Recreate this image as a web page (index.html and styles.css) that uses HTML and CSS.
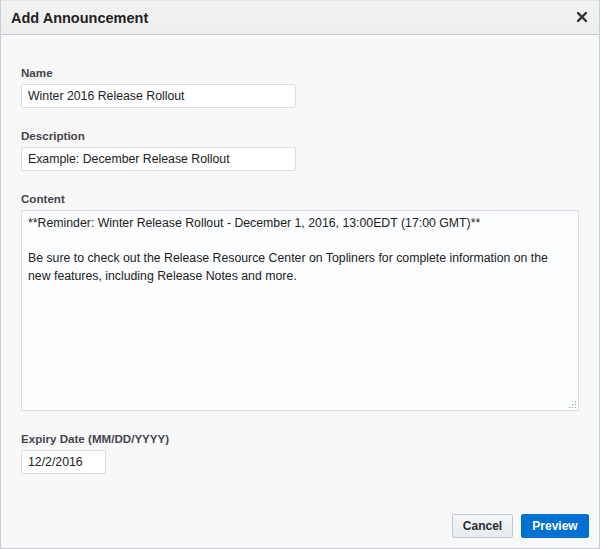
FILE: index.html
```html
<!DOCTYPE html>
<html>
<head>
<meta charset="utf-8">
<link rel="stylesheet" href="styles.css">
</head>
<body>
<div class="dialog">
  <div class="header">
    <h1 class="title">Add Announcement</h1>
    <button class="close" aria-label="Close">
      <svg width="10" height="10" viewBox="0 0 10 10"><path d="M1 1 L9 9 M9 1 L1 9" stroke="#333" stroke-width="2.4" stroke-linecap="square"/></svg>
    </button>
  </div>
  <div class="body">
    <div class="field">
      <label class="label">Name</label>
      <input class="input input-md" type="text" value="Winter 2016 Release Rollout">
    </div>
    <div class="field">
      <label class="label">Description</label>
      <input class="input input-md" type="text" value="Example: December Release Rollout">
    </div>
    <div class="field">
      <label class="label">Content</label>
      <div class="textarea-wrap">
        <textarea class="textarea">**Reminder: Winter Release Rollout - December 1, 2016, 13:00EDT (17:00 GMT)**

Be sure to check out the Release Resource Center on Topliners for complete information on the new features, including Release Notes and more.</textarea>
        <svg class="grip" width="9" height="9" viewBox="0 0 9 9">
          <g fill="#9aa0a8">
            <rect x="7" y="1" width="1" height="1"/>
            <rect x="4" y="4" width="1" height="1"/>
            <rect x="7" y="4" width="1" height="1"/>
            <rect x="1" y="7" width="1" height="1"/>
            <rect x="4" y="7" width="1" height="1"/>
            <rect x="7" y="7" width="1" height="1"/>
            <rect x="7" y="2.5" width="1" height="1" opacity=".5"/>
            <rect x="5.5" y="5.5" width="1" height="1" opacity=".5"/>
            <rect x="2.5" y="7" width="1" height="1" opacity=".5"/>
          </g>
        </svg>
      </div>
    </div>
    <div class="field">
      <label class="label">Expiry Date (MM/DD/YYYY)</label>
      <input class="input input-sm" type="text" value="12/2/2016">
    </div>
  </div>
  <div class="footer">
    <button class="btn btn-neutral">Cancel</button>
    <button class="btn btn-brand">Preview</button>
  </div>
</div>
</body>
</html>
```

FILE: styles.css
```css
* { box-sizing: border-box; }
html, body { margin: 0; padding: 0; }
body {
  font-family: "Liberation Sans", Arial, sans-serif;
  font-size: 12px;
  color: #333;
  background: #fff;
}
.dialog {
  width: 600px;
  height: 549px;
  border: 1px solid #c5ccd8;
  border-top-color: #e2e5ea;
  background: #f8f8f8;
  display: flex;
  flex-direction: column;
}
.header {
  height: 34px;
  flex: none;
  display: flex;
  align-items: center;
  justify-content: space-between;
  padding: 0 12px 0 10px;
  background: linear-gradient(#f3f3f3, #eeeeee);
  border-bottom: 1px solid #c5ccd8;
}
.title {
  margin: 0;
  font-size: 14.5px;
  font-weight: bold;
  color: #222;
  padding-top: 1px;
}
.close {
  border: 0;
  background: none;
  padding: 0;
  width: 10px;
  height: 10px;
  display: flex;
  margin-top: -1px;
}
.body {
  padding: 31px 20px 0;
  flex: 1;
}
.field { margin-bottom: 21px; }
.label {
  display: block;
  font-weight: bold;
  font-size: 11.6px;
  line-height: 14px;
  color: #45454f;
  margin-bottom: 4px;
}
.input {
  display: block;
  height: 24px;
  border: 1px solid #d8dde6;
  border-radius: 2px;
  background: #fff;
  font-family: "Liberation Sans", Arial, sans-serif;
  font-size: 12.3px;
  color: #222;
  padding: 0 6px;
  outline: none;
}
.input-md { width: 275px; }
.input-sm { width: 85px; }
.textarea-wrap {
  position: relative;
  width: 558px;
}
.textarea {
  display: block;
  width: 558px;
  height: 201px;
  border: 1px solid #d8dde6;
  border-radius: 2px;
  background: #fcfdff;
  font-family: "Liberation Sans", Arial, sans-serif;
  font-size: 12.3px;
  line-height: 17.5px;
  color: #222;
  padding: 4px 8px 4px 6px;
  resize: none;
  outline: none;
  overflow: hidden;
}
.grip {
  position: absolute;
  right: 2px;
  bottom: 2px;
}
.footer {
  flex: none;
  display: flex;
  justify-content: flex-end;
  gap: 8px;
  padding: 0 10px 10px;
}
.btn {
  height: 24px;
  border-radius: 2px;
  font-family: "Liberation Sans", Arial, sans-serif;
  font-size: 12px;
  font-weight: bold;
  padding: 0 8px;
}
.btn-neutral {
  width: 61px;
  background: linear-gradient(#f4f6f8, #e8ebee);
  border: 1px solid #c2c9d2;
  color: #2a2a35;
}
.btn-brand {
  width: 68px;
  background: #0070d2;
  border: 1px solid #0070d2;
  color: #fff;
}
```
